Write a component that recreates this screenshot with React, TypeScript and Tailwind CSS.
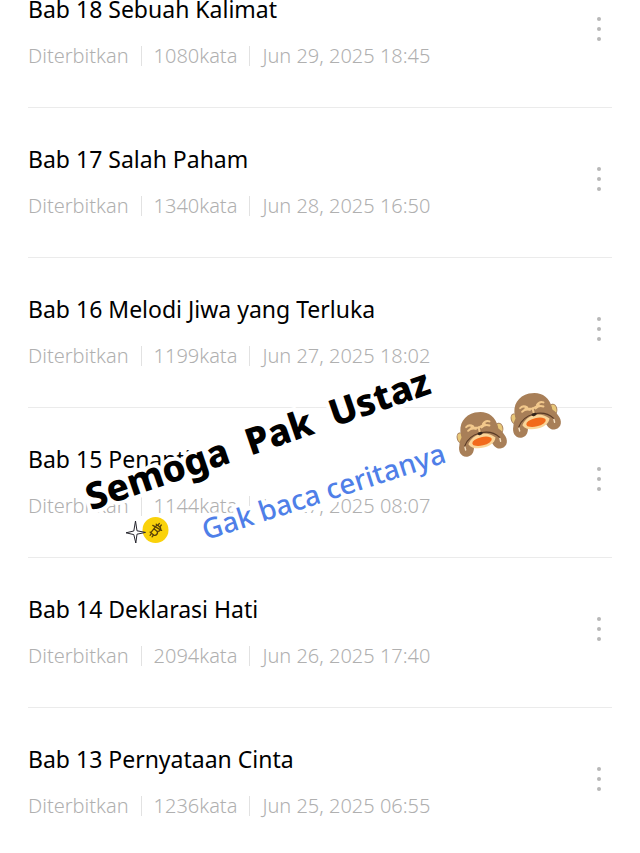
const chapters = [
  { title: "Bab 18 Sebuah Kalimat", words: 1080, date: "Jun 29, 2025 18:45" },
  { title: "Bab 17 Salah Paham", words: 1340, date: "Jun 28, 2025 16:50" },
  { title: "Bab 16 Melodi Jiwa yang Terluka", words: 1199, date: "Jun 27, 2025 18:02" },
  { title: "Bab 15 Penantian", words: 1144, date: "Jun 27, 2025 08:07" },
  { title: "Bab 14 Deklarasi Hati", words: 2094, date: "Jun 26, 2025 17:40" },
  { title: "Bab 13 Pernyataan Cinta", words: 1236, date: "Jun 25, 2025 06:55" },
];

function Monkey({ className }: { className: string }) {
  return (
    <svg viewBox="0 0 52 46" className={className} aria-hidden="true">
      <ellipse cx="6" cy="23" rx="3.4" ry="5" fill="#e9c879" stroke="#a87f58" strokeWidth="1" />
      <ellipse cx="46" cy="23" rx="3.4" ry="5" fill="#e9c879" stroke="#a87f58" strokeWidth="1" />
      <path d="M26 2C15 2 7 9 7 21c0 11 8 15 19 15s19-4 19-15C45 9 37 2 26 2Z" fill="#a87f58" />
      <path d="M8 22c5-5 12-5 17 0-4 4-7 8-8 12-1 5-3 9-8 9-7 0-9-7-6-13 1-4 3-6 5-8Z" fill="#a87f58" />
      <path d="M44 22c-5-5-12-5-17 0 4 4 7 8 8 12 1 5 3 9 8 9 7 0 9-7 6-13-1-4-3-6-5-8Z" fill="#a87f58" />
      <path d="M12 31c4-5 9-7 14-7s10 2 14 7c-2 5-8 7-14 7s-12-2-14-7Z" fill="#fad598" />
      <ellipse cx="26" cy="31.5" rx="10" ry="4.2" fill="#f26a1b" />
      <path d="M8 32c4-6 10-9 18-9s14 3 18 9" fill="none" stroke="#5a3b26" strokeWidth="1.2" strokeLinecap="round" />
      <path d="M8 33v3M44 33v3" fill="none" stroke="#f4dfc0" strokeWidth="1.4" strokeLinecap="round" />
      <path
        d="M14 14c3-2 5-1 7 1M15 18c3-2 5-2 8 0M38 14c-3-2-5-1-7 1M37 18c-3-2-5-2-8 0M19 15.5l7 2 7-2M26 17v6"
        fill="none"
        stroke="#f2c88c"
        strokeWidth="2"
        strokeLinecap="round"
        strokeLinejoin="round"
      />
      <ellipse cx="26" cy="23.5" rx="2.6" ry="1.5" fill="#33241b" />
    </svg>
  );
}

function CoinSparkle({ className }: { className: string }) {
  return (
    <svg viewBox="0 0 44 28" className={className} aria-hidden="true">
      <circle cx="30.5" cy="14" r="13" fill="#fad20a" />
      <g transform="rotate(38 30.5 14)" fill="none" stroke="#5a4208" strokeWidth="1.3" strokeLinecap="round" strokeLinejoin="round">
        <path d="M27.5 9h4.2a2.3 2.3 0 0 1 0 5a2.4 2.4 0 0 1 0 5h-4.2M28.5 9v10M28.5 14h3.5" />
        <path d="M29.5 6.5v2M32 6.5v2M29.5 19.5v2M32 19.5v2M25.5 12l10-1.5" />
      </g>
      <path
        d="M10.5 5l1.5 9.8 8.5 1.6-8.5 1.8-1.2 8.8-2-8.4-7.8-1.8 7.8-1.8Z"
        fill="white"
        stroke="#25252d"
        strokeWidth="1"
        strokeLinejoin="round"
      />
    </svg>
  );
}

export default function App() {
  return (
    <main className="relative h-screen overflow-hidden bg-white font-['Noto_Sans',sans-serif]">
      <ul className="-mt-[42px] px-7">
        {chapters.map((chapter) => (
          <li key={chapter.title} className="flex items-start justify-between border-b border-[#ebebeb] pt-[35px] pb-9">
            <div>
              <h2 className="text-[23px] leading-8 font-normal text-black">{chapter.title}</h2>
              <p className="mt-4 flex items-center text-xl leading-[30px] font-light text-[#b0b0b0]">
                <span>Diterbitkan</span>
                <span className="mx-3 h-5 w-px bg-[#e2e2e2]" />
                <span>{chapter.words}kata</span>
                <span className="mx-3 h-5 w-px bg-[#e2e2e2]" />
                <time>{chapter.date}</time>
              </p>
            </div>
            <button
              aria-label={`Menu ${chapter.title}`}
              className="mt-3 flex h-12 w-[26px] flex-col items-center justify-center gap-1.5"
            >
              <span className="size-1 rounded-full bg-[#b8b8b8]" />
              <span className="size-1 rounded-full bg-[#b8b8b8]" />
              <span className="size-1 rounded-full bg-[#b8b8b8]" />
            </button>
          </li>
        ))}
      </ul>

      {/* Stickers and captions placed on top of the list */}
      <p className="absolute top-[470px] left-[95px] origin-bottom-left -rotate-19 text-[37px] leading-[52px] font-extrabold whitespace-pre text-black [-webkit-text-stroke:8px_white] [paint-order:stroke_fill]">
        {"Semoga  Pak  Ustaz"}
      </p>
      <p className="absolute top-[511px] left-[208px] origin-bottom-left -rotate-18 text-[28px] leading-9 font-medium whitespace-nowrap text-[#4f7fe8] [-webkit-text-stroke:8px_white] [paint-order:stroke_fill]">
        Gak baca ceritanya
      </p>
      <Monkey className="absolute top-[410px] left-[454px] w-[52px] -rotate-14" />
      <Monkey className="absolute top-[391px] left-[508px] w-[52px] -rotate-14" />
      <CoinSparkle className="absolute top-[516px] left-[125px] w-11" />
    </main>
  );
}
